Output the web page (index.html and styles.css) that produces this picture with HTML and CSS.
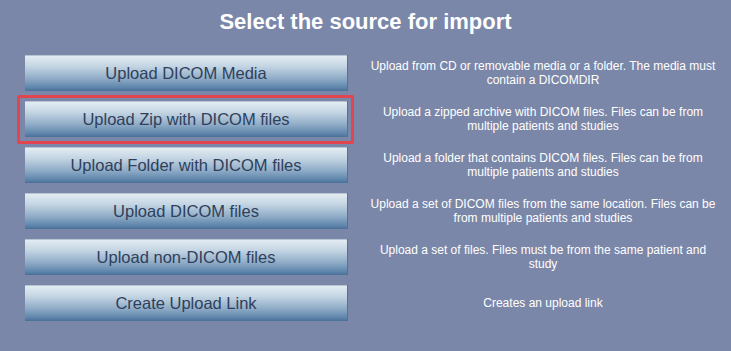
FILE: index.html
```html
<!DOCTYPE html>
<html>
<head>
<meta charset="utf-8">
<link rel="stylesheet" href="styles.css">
</head>
<body>
<div class="page">
  <h1 class="title">Select the source for import</h1>
  <div class="list">
    <div class="row">
      <div class="btn">Upload DICOM Media</div>
      <div class="desc">Upload from CD or removable media or a folder. The media must contain a DICOMDIR</div>
    </div>
    <div class="row">
      <div class="btn selected">Upload Zip with DICOM files</div>
      <div class="desc">Upload a zipped archive with DICOM files. Files can be from multiple patients and studies</div>
    </div>
    <div class="row">
      <div class="btn">Upload Folder with DICOM files</div>
      <div class="desc">Upload a folder that contains DICOM files. Files can be from multiple patients and studies</div>
    </div>
    <div class="row">
      <div class="btn">Upload DICOM files</div>
      <div class="desc">Upload a set of DICOM files from the same location. Files can be from multiple patients and studies</div>
    </div>
    <div class="row">
      <div class="btn">Upload non-DICOM files</div>
      <div class="desc">Upload a set of files. Files must be from the same patient and study</div>
    </div>
    <div class="row">
      <div class="btn">Create Upload Link</div>
      <div class="desc">Creates an upload link</div>
    </div>
  </div>
</div>
</body>
</html>
```

FILE: styles.css
```css
html, body {
  margin: 0;
  padding: 0;
  background: #7b87a9;
  font-family: "Liberation Sans", Arial, sans-serif;
}
.page {
  width: 731px;
  height: 351px;
  overflow: hidden;
}
.title {
  margin: 0;
  padding-top: 9px;
  font-size: 22px;
  line-height: 26px;
  font-weight: bold;
  color: #ffffff;
  text-align: center;
}
.list {
  display: flex;
  flex-direction: column;
  gap: 10px;
  padding: 20px 0 0 25px;
}
.row {
  display: grid;
  grid-template-columns: 322px 1fr;
  height: 36px;
  align-items: center;
}
.btn {
  position: relative;
  height: 36px;
  box-sizing: border-box;
  display: flex;
  align-items: center;
  justify-content: center;
  font-size: 16.5px;
  color: #2f3f5c;
  background: linear-gradient(to bottom, #e3ecf2 0%, #c3d4e2 30%, #8eabc6 65%, #5a82a9 92%, #4b6f96 100%);
  border-top: 1px solid #b8c4d2;
  box-shadow: 1px 0 0 #5f6d8e;
}
.btn.selected::after {
  content: "";
  position: absolute;
  left: -8px;
  right: -7px;
  top: -7px;
  bottom: -7px;
  border: 3px solid #e2454e;
  border-radius: 2px;
}
.desc {
  padding: 0 12px 0 20px;
  font-size: 12px;
  line-height: 14px;
  color: #ffffff;
  text-align: center;
}
```
